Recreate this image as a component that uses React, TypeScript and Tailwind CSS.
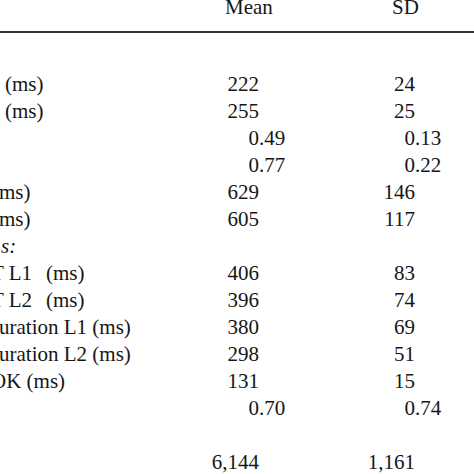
type Row = {
  label: string;
  indent: string;
  unit?: string;
  italic?: boolean;
  mean?: string;
  sd?: string;
};

const rows: Row[] = [
  { label: "(ms)", indent: "ml-[5px]", mean: "222", sd: "24" },
  { label: "(ms)", indent: "ml-[5px]", mean: "255", sd: "25" },
  { label: "", indent: "", mean: "0.49", sd: "0.13" },
  { label: "", indent: "", mean: "0.77", sd: "0.22" },
  { label: "(ms)", indent: "-ml-[8px]", mean: "629", sd: "146" },
  { label: "(ms)", indent: "-ml-[8px]", mean: "605", sd: "117" },
  { label: "s:", indent: "ml-[1px]", italic: true },
  { label: "T L1", unit: "(ms)", indent: "-ml-[9px]", mean: "406", sd: "83" },
  { label: "T L2", unit: "(ms)", indent: "-ml-[9px]", mean: "396", sd: "74" },
  { label: "uration L1 (ms)", indent: "-ml-[1px]", mean: "380", sd: "69" },
  { label: "uration L2 (ms)", indent: "-ml-[1px]", mean: "298", sd: "51" },
  { label: "OK (ms)", indent: "-ml-[9px]", mean: "131", sd: "15" },
  { label: "", indent: "", mean: "0.70", sd: "0.74" },
  { label: "", indent: "" },
  { label: "", indent: "", mean: "6,144", sd: "1,161" },
];

// split a value so the integer part lines up on the decimal point
function split(v?: string): [string, string] {
  if (!v) return ["", ""];
  const i = v.indexOf(".");
  if (i < 0) return [v, ""];
  return [v.slice(0, i), v.slice(i)];
}

export default function App() {
  return (
    <div className="w-[474px] h-[474px] overflow-hidden bg-white text-[#161616] text-[21px] leading-[27px] font-['Liberation_Serif',serif]">
      <div className="-mt-[6px]">
        {/* header */}
        <div className="flex h-[37px]">
          <div className="w-[225px]" />
          <div className="w-[167px]">Mean</div>
          <div>SD</div>
        </div>
        <div className="h-[2px] bg-[#333]" />

        {/* body */}
        <div className="mt-[38px]">
          {rows.map((r, idx) => {
            const [mi, mf] = split(r.mean);
            const [si, sf] = split(r.sd);
            return (
              <div key={idx} className="flex h-[27px] whitespace-nowrap">
                <div className="w-[180px]">
                  <span className={`${r.indent} inline-block ${r.italic ? "italic" : ""}`}>
                    {r.label}
                  </span>
                  {r.unit && <span className="ml-[14px]">{r.unit}</span>}
                </div>
                <div className="w-[79px] text-right">{mi}</div>
                <div className="w-[56px]">{mf}</div>
                <div className="w-[100px] text-right">{si}</div>
                <div className="flex-1">{sf}</div>
              </div>
            );
          })}
        </div>
      </div>
    </div>
  );
}
